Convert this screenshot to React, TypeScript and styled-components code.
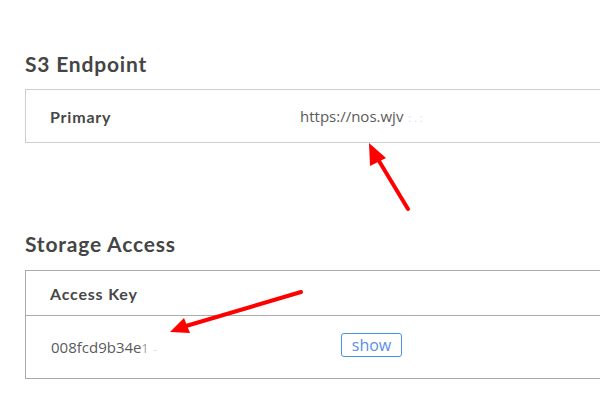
import React from "react";
import styled, { createGlobalStyle } from "styled-components";

const Global = createGlobalStyle`
  html, body { margin: 0; padding: 0; background: #fff; }
  body { overflow: hidden; width: 600px; height: 407px; }
`;

const Page = styled.div`
  position: relative;
  width: 600px;
  height: 407px;
  overflow: hidden;
  padding: 0 0 0 25px;
  box-sizing: border-box;
  font-family: "Open Sans", "Liberation Sans", sans-serif;
  color: #555;
`;

const Heading = styled.h2<{ $top: number }>`
  margin: ${(p) => p.$top}px 0 0 0;
  font-family: Lato, "Open Sans", sans-serif;
  font-weight: 700;
  font-size: 21px;
  line-height: 24px;
  color: #454545;
  letter-spacing: 0.8px;
`;

const Box = styled.div<{ $top: number; $border: string }>`
  margin-top: ${(p) => p.$top}px;
  width: 640px;
  border: 1px solid ${(p) => p.$border};
  box-sizing: border-box;
`;

const Row = styled.div<{ $h: number; $cols: string; $divider?: boolean }>`
  display: grid;
  grid-template-columns: ${(p) => p.$cols};
  align-items: center;
  height: ${(p) => p.$h}px;
  border-bottom: ${(p) => (p.$divider ? "1px solid #aaa" : "none")};
  box-sizing: border-box;
`;

const Label = styled.div`
  padding-left: 24px;
  font-family: Lato, "Open Sans", sans-serif;
  font-weight: 700;
  font-size: 16px;
  color: #474747;
  letter-spacing: 0.8px;
`;

const Value = styled.div<{ $pad?: number }>`
  padding-left: ${(p) => p.$pad ?? 0}px;
  font-family: "Open Sans", sans-serif;
  font-size: 15px;
  color: #5a5a5a;
  white-space: nowrap;
`;

const Faint = styled.span`
  color: #d8dbe8;
  font-size: 11px;
  margin-left: 2px;
`;

const Dim = styled.span`
  color: #9a9a9a;
  font-size: 12px;
`;

const ShowButton = styled.button`
  width: 61px;
  height: 24px;
  padding: 0;
  border: 1px solid #4a90e2;
  border-radius: 3px;
  background: #fff;
  color: #5b8fe8;
  font-family: "Open Sans", sans-serif;
  font-size: 16px;
  line-height: 20px;
  cursor: pointer;
`;

const ButtonCell = styled.div`
  margin-top: -4px;
`;

const Overlay = styled.svg`
  position: absolute;
  left: 0;
  top: 0;
  pointer-events: none;
`;

export default function App() {
  return (
    <Page>
      <Global />
      <Heading $top={52}>S3 Endpoint</Heading>
      <Box $top={13} $border="#cfcfcf">
        <Row $h={52} $cols="274px 1fr">
          <Label>Primary</Label>
          <Value>
            https://nos.wjv<Faint>{"  :        .  :"}</Faint>
          </Value>
        </Row>
      </Box>
      <Heading $top={89}>Storage Access</Heading>
      <Box $top={14} $border="#aaa">
        <Row $h={45} $cols="1fr" $divider>
          <Label>Access Key</Label>
        </Row>
        <Row $h={62} $cols="315px 1fr">
          <Value $pad={25}>
            008fcd9b34e<Dim>1</Dim>
            <Faint> -</Faint>
          </Value>
          <ButtonCell>
            <ShowButton>show</ShowButton>
          </ButtonCell>
        </Row>
      </Box>
      <Overlay width="600" height="407" viewBox="0 0 600 407">
        <line x1="408" y1="209" x2="376" y2="156" stroke="#ff0000" strokeWidth="4" strokeLinecap="round" />
        <polygon points="369,143 386,158 370,166" fill="#ff0000" />
        <line x1="301" y1="292" x2="186" y2="326" stroke="#ff0000" strokeWidth="4" strokeLinecap="round" />
        <polygon points="170,332 184,318 190,333" fill="#ff0000" />
      </Overlay>
    </Page>
  );
}
